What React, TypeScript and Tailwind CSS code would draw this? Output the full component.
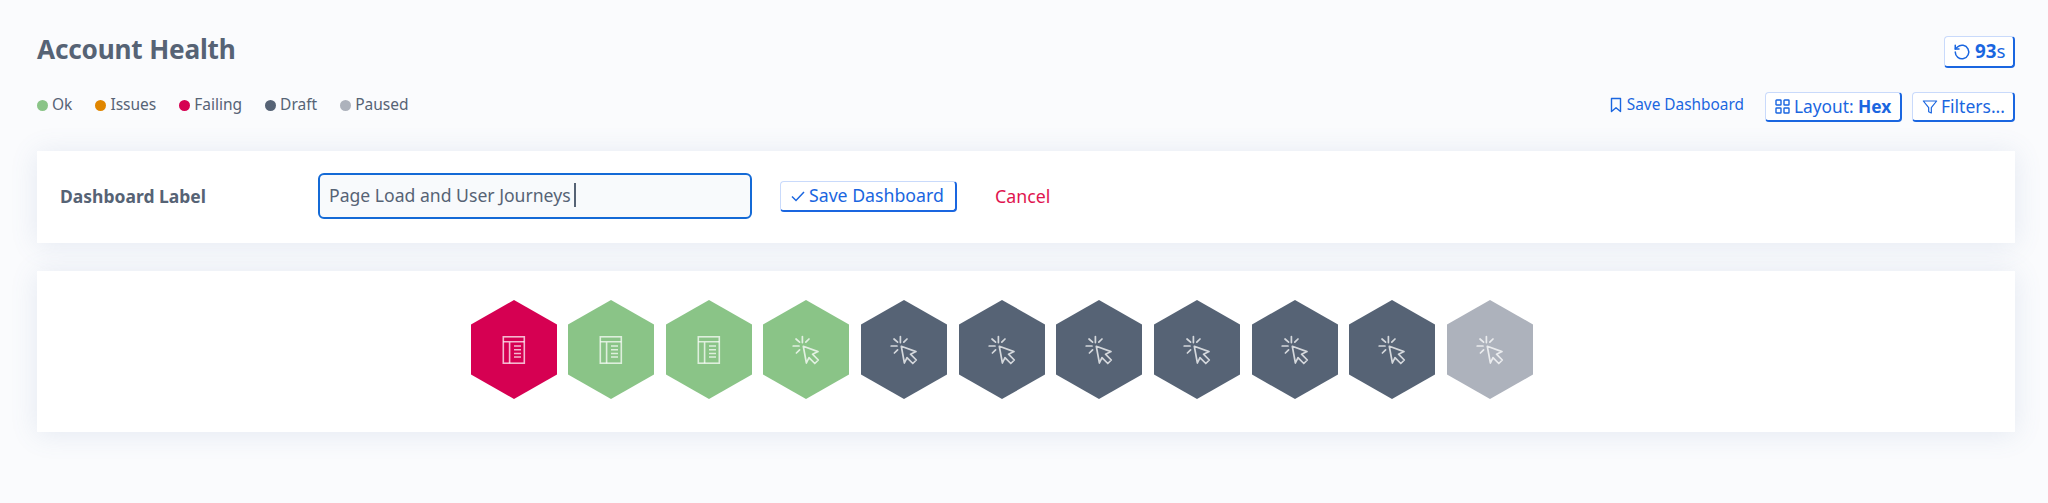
import React from "react";

const BLUE = "#1a66e0";

function TableIcon() {
  return (
    <svg x="0" y="0" width="86" height="99" viewBox="0 0 86 99" fill="none" stroke="#ffffff" strokeOpacity="0.72" strokeWidth="1.6">
      <rect x="32.3" y="36.8" width="21" height="26.4" />
      <path d="M32.3 41.8H53.3M38.6 41.8V63.2" />
      <path d="M43 46H50M43 49.7H50M43 53.4H50M43 57.1H50" strokeWidth="1.5" />
    </svg>
  );
}

function ClickIcon() {
  return (
    <svg x="0" y="0" width="86" height="99" viewBox="0 0 86 99" fill="none" stroke="#ffffff" strokeOpacity="0.75" strokeWidth="1.7">
      <path d="M40.3 46.3L55 51.6L49.5 54.2L55.3 60L51.8 63.5L46 57.7L43.4 63Z" strokeLinejoin="round" />
      <path d="M39.4 36.5V42.6M30.2 46H36M33 39L36.6 42.2M46 39L42.8 42.2M33.4 53L36.6 49.8" strokeLinecap="round" />
    </svg>
  );
}

function Hex({ color, icon }: { color: string; icon: "table" | "click" }) {
  return (
    <svg width="86" height="99" viewBox="0 0 86 99" className="shrink-0 block">
      <polygon points="43,0 86,24.5 86,74.5 43,99 0,74.5 0,24.5" fill={color} />
      {icon === "table" ? <TableIcon /> : <ClickIcon />}
    </svg>
  );
}

function Legend({ color, label }: { color: string; label: string }) {
  return (
    <div className="flex items-center gap-[4px]">
      <span className="w-[11px] h-[11px] rounded-full" style={{ backgroundColor: color }} />
      <span>{label}</span>
    </div>
  );
}

const hexes: { color: string; icon: "table" | "click" }[] = [
  { color: "#d60052", icon: "table" },
  { color: "#8ac487", icon: "table" },
  { color: "#8ac487", icon: "table" },
  { color: "#8ac487", icon: "click" },
  { color: "#566375", icon: "click" },
  { color: "#566375", icon: "click" },
  { color: "#566375", icon: "click" },
  { color: "#566375", icon: "click" },
  { color: "#566375", icon: "click" },
  { color: "#566375", icon: "click" },
  { color: "#adb2bc", icon: "click" },
];

const btn =
  "flex items-center rounded-[4px] border border-[#c9dafb] border-r-2 border-b-2 border-r-[#1a66e0] border-b-[#1a66e0] bg-white text-[#1a66e0]";

export default function App() {
  return (
    <div
      className="h-[503px] w-[2048px] overflow-hidden bg-[#fafbfd] pl-[37px] pr-[33px] pt-[36px] text-[#566375]"
      style={{ fontFamily: '"Noto Sans", "Open Sans", sans-serif' }}
    >
      <div className="flex items-start justify-between h-[31px]">
        <h1 className="text-[26.2px] leading-[27px] font-bold tracking-[-0.2px]">Account Health</h1>
        <button className={`${btn} h-[32px] w-[71px] pl-[8px] gap-[4px] text-[18.8px]`}>
          <svg width="18" height="18" viewBox="0 0 24 24" fill="none" stroke={BLUE} strokeWidth="2" strokeLinecap="round" strokeLinejoin="round">
            <path d="M3 12a9 9 0 1 0 3-6.7L3 8" />
            <path d="M3 3v5h5" />
          </svg>
          <span className="font-bold">
            93<span className="font-normal">s</span>
          </span>
        </button>
      </div>

      <div className="flex items-center justify-between mt-[25px] h-[30px]">
        <div className="flex items-center gap-[23px] text-[15.5px] mb-[4px]">
          <Legend color="#8ac487" label="Ok" />
          <Legend color="#e08600" label="Issues" />
          <Legend color="#d60052" label="Failing" />
          <Legend color="#566375" label="Draft" />
          <Legend color="#adb2bc" label="Paused" />
        </div>
        <div className="flex items-center">
          <a className="flex items-center gap-[4px] text-[15.4px] text-[#1a66e0] mr-[21px] mb-[4px]">
            <svg width="14" height="16" viewBox="0 0 14 16" fill="none" stroke={BLUE} strokeWidth="1.4" strokeLinejoin="round">
              <path d="M2.5 1.5H11.5V14.5L7 10.8L2.5 14.5Z" />
            </svg>
            Save Dashboard
          </a>
          <button className={`${btn} h-[30px] w-[137px] pl-[9px] gap-[4px] text-[17.3px]`}>
            <svg width="15" height="15" viewBox="0 0 15 15" fill="none" stroke={BLUE} strokeWidth="1.4">
              <rect x="1" y="1" width="5" height="5" rx="0.6" />
              <rect x="9" y="1" width="5" height="5" rx="0.6" />
              <rect x="1" y="9" width="5" height="5" rx="0.6" />
              <rect x="9" y="9" width="5" height="5" rx="0.6" />
            </svg>
            <span>
              Layout: <b>Hex</b>
            </span>
          </button>
          <button className={`${btn} h-[30px] w-[103px] ml-[10px] pl-[9px] gap-[3px] text-[17.5px]`}>
            <svg width="16" height="16" viewBox="0 0 24 24" fill="none" stroke={BLUE} strokeWidth="1.8" strokeLinejoin="round">
              <path d="M2 3h20l-8 10v8l-4-2v-6Z" />
            </svg>
            Filters...
          </button>
        </div>
      </div>

      <div className="mt-[29px] h-[92px] bg-white flex items-center pl-[23px] pb-[2px] shadow-[0_2px_26px_rgba(90,120,170,0.14)]">
        <label className="w-[258px] text-[17.5px] font-bold">Dashboard Label</label>
        <div className="w-[434px] h-[46px] rounded-[6px] border-2 border-[#146ad6] bg-[#f8fafc] flex items-center pl-[9px] pb-[2px] text-[17.6px]">
          <span>Page Load and User Journeys</span>
          <span className="ml-[3px] w-[2px] h-[24px] bg-[#566375]" />
        </div>
        <button className={`${btn} ml-[28px] h-[31px] w-[177px] pl-[9px] gap-[3px] text-[17.7px]`}>
          <svg width="16" height="16" viewBox="0 0 16 16" fill="none" stroke={BLUE} strokeWidth="1.5">
            <path d="M2 8.5L6 12.5L14 4" />
          </svg>
          Save Dashboard
        </button>
        <a className="ml-[38px] text-[17.8px] text-[#e0144f]">Cancel</a>
      </div>

      <div className="mt-[28px] h-[161px] bg-white flex items-start justify-center gap-[11.65px] pt-[29px] pr-[48.5px] shadow-[0_2px_26px_rgba(90,120,170,0.14)]">
        {hexes.map((h, i) => (
          <Hex key={i} color={h.color} icon={h.icon} />
        ))}
      </div>
    </div>
  );
}
